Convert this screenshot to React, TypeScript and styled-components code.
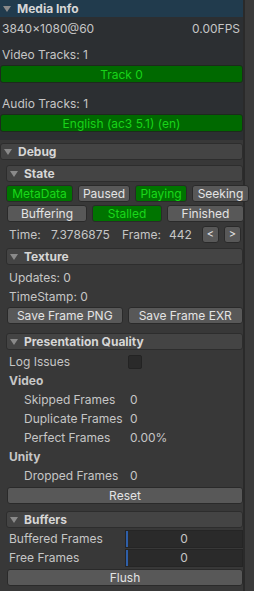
import React from "react";
import styled, { createGlobalStyle } from "styled-components";

const Global = createGlobalStyle`
  html, body { margin: 0; padding: 0; background: #383838; }
  body { font-family: Inter, "Noto Sans", sans-serif; font-size: 12px; color: #c6c6c6; }
  * { box-sizing: border-box; }
`;

const Page = styled.div`
  width: 254px;
  height: 591px;
  display: flex;
  overflow: hidden;
  background: #383838;
`;

const Main = styled.div`
  width: 243px;
  display: flex;
  flex-direction: column;
  position: relative;
  z-index: 1;
`;

const Strip = styled.div`
  width: 11px;
  border-left: 2px solid #2a2a2a;
  background: #3a3a3a;
`;

const InfoBlock = styled.div`
  background: #2c2f32;
  padding-bottom: 8px;
`;

const InfoHeader = styled.div`
  height: 17px;
  background: #213b4d;
  display: flex;
  align-items: center;
  gap: 6px;
  padding-left: 3px;
  font-weight: 700;
  color: #d6d6d6;
`;

const Tri = styled.span`
  width: 0;
  height: 0;
  border-left: 4px solid transparent;
  border-right: 4px solid transparent;
  border-top: 6px solid #8a8a8a;
`;

const Line = styled.div<{ $top?: number; $indent?: number }>`
  height: 18px;
  display: flex;
  align-items: center;
  justify-content: space-between;
  padding: 0 3px 0 ${(p) => p.$indent ?? 2}px;
  margin-top: ${(p) => p.$top ?? 0}px;
  white-space: nowrap;
`;

const GreenBar = styled.div<{ $top?: number }>`
  height: 18px;
  margin-top: ${(p) => p.$top ?? 0}px;
  background: #006900;
  border: 1px solid #1d2a1d;
  border-radius: 3px;
  display: flex;
  align-items: center;
  justify-content: center;
  color: #19d419;
`;

const Section = styled.div<{ $top?: number }>`
  margin-top: ${(p) => p.$top ?? 0}px;
  display: flex;
  flex-direction: column;
`;

const Header = styled.div`
  height: 17px;
  background: #444444;
  border: 1px solid #2d2d2d;
  border-radius: 3px;
  display: flex;
  align-items: center;
  gap: 6px;
  padding-left: 3px;
  font-weight: 700;
  color: #d6d6d6;
`;

const Body = styled.div`
  padding-left: 6px;
  display: flex;
  flex-direction: column;
`;

const Sub = styled.div`
  padding-left: 3px;
  display: flex;
  flex-direction: column;
`;

const BtnRow = styled.div<{ $top?: number; $gap?: number; $inset?: number }>`
  display: flex;
  gap: ${(p) => p.$gap ?? 5}px;
  margin-top: ${(p) => p.$top ?? 0}px;
  padding-left: ${(p) => p.$inset ?? 0}px;
  white-space: nowrap;
`;

const Btn = styled.div<{ $on?: boolean; $w?: number; $grow?: boolean }>`
  height: 17px;
  ${(p) => (p.$w ? `width: ${p.$w}px;` : "")}
  ${(p) => (p.$grow ? "flex: 1;" : "")}
  flex-shrink: 0;
  background: ${(p) => (p.$on ? "#007400" : "#585858")};
  color: ${(p) => (p.$on ? "#1ad81a" : "#e4e4e4")};
  border: 1px solid #2a2a2a;
  border-radius: 3px;
  display: flex;
  align-items: center;
  justify-content: center;
`;

const TimeRow = styled.div`
  height: 18px;
  margin-top: 3px;
  display: flex;
  align-items: center;
  white-space: nowrap;
  padding-left: 3px;
`;

const Lbl = styled.span<{ $w?: number }>`
  display: inline-block;
  ${(p) => (p.$w ? `width: ${p.$w}px;` : "")}
`;

const SmallBtn = styled.div`
  width: 17px;
  height: 17px;
  background: #585858;
  border: 1px solid #2a2a2a;
  border-radius: 3px;
  display: flex;
  align-items: center;
  justify-content: center;
  color: #e4e4e4;
  font-size: 11px;
  & + & { margin-left: 5px; }
`;

const FieldRow = styled.div<{ $indent?: number; $top?: number; $bold?: boolean }>`
  height: 19px;
  display: flex;
  align-items: center;
  white-space: nowrap;
  padding-left: ${(p) => p.$indent ?? 0}px;
  margin-top: ${(p) => p.$top ?? 0}px;
  font-weight: ${(p) => (p.$bold ? 700 : 400)};
`;

const Check = styled.div`
  width: 14px;
  height: 14px;
  background: #2a2a2a;
  border: 1px solid #232323;
  border-radius: 2px;
`;

const WideBtn = styled(Btn)`
  flex: 1;
  margin-top: 2px;
`;

const Meter = styled.div`
  flex: 1;
  height: 18px;
  background: #2a2a2a;
  border: 1px solid #252525;
  position: relative;
  display: flex;
  align-items: center;
  justify-content: center;
`;

const MeterMark = styled.div`
  position: absolute;
  left: 0;
  top: 0;
  bottom: 0;
  width: 2px;
  background: #2f5fa8;
`;

const Title = ({ children }: { children: React.ReactNode }) => (
  <>
    <Tri />
    <span>{children}</span>
  </>
);

export default function App() {
  return (
    <>
      <Global />
      <Page>
        <Main>
          <InfoBlock>
            <InfoHeader>
              <Title>Media Info</Title>
            </InfoHeader>
            <Line $top={2}>
              <span>3840x1080@60</span>
              <span>0.00FPS</span>
            </Line>
            <Line $top={8}>Video Tracks: 1</Line>
            <GreenBar $top={2}>Track 0</GreenBar>
            <Line $top={11}>Audio Tracks: 1</Line>
            <GreenBar $top={2}>English (ac3 5.1) (en)</GreenBar>
          </InfoBlock>
          <Section $top={3}>
            <Header>
              <Title>Debug</Title>
            </Header>
            <Body>
              <Section $top={5}>
                <Header>
                  <Title>State</Title>
                </Header>
                <BtnRow $top={3}>
                  <Btn $on $w={67}>MetaData</Btn>
                  <Btn $w={52}>Paused</Btn>
                  <Btn $on $w={52}>Playing</Btn>
                  <Btn $w={57}>Seeking</Btn>
                </BtnRow>
                <BtnRow $top={3} $inset={1}>
                  <Btn $w={80}>Buffering</Btn>
                  <Btn $on $w={70}>Stalled</Btn>
                  <Btn $w={77}>Finished</Btn>
                </BtnRow>
                <TimeRow>
                  <Lbl $w={42}>Time:</Lbl>
                  <Lbl $w={71}>7.3786875</Lbl>
                  <Lbl $w={47}>Frame:</Lbl>
                  <Lbl $w={33}>442</Lbl>
                  <SmallBtn>&lt;</SmallBtn>
                  <SmallBtn>&gt;</SmallBtn>
                </TimeRow>
              </Section>
              <Section $top={5}>
                <Header>
                  <Title>Texture</Title>
                </Header>
                <Sub>
                  <FieldRow $top={3}>Updates: 0</FieldRow>
                  <FieldRow>TimeStamp: 0</FieldRow>
                </Sub>
                <BtnRow $top={1} $inset={1}>
                  <Btn $grow>Save Frame PNG</Btn>
                  <Btn $grow>Save Frame EXR</Btn>
                </BtnRow>
              </Section>
              <Section $top={9}>
                <Header>
                  <Title>Presentation Quality</Title>
                </Header>
                <Sub>
                  <FieldRow $top={2}>
                    <Lbl $w={119}>Log Issues</Lbl>
                    <Check />
                  </FieldRow>
                  <FieldRow $bold>Video</FieldRow>
                  <FieldRow $indent={15}>
                    <Lbl $w={106}>Skipped Frames</Lbl>0
                  </FieldRow>
                  <FieldRow $indent={15}>
                    <Lbl $w={106}>Duplicate Frames</Lbl>0
                  </FieldRow>
                  <FieldRow $indent={15}>
                    <Lbl $w={106}>Perfect Frames</Lbl>0.00%
                  </FieldRow>
                  <FieldRow $bold>Unity</FieldRow>
                  <FieldRow $indent={15}>
                    <Lbl $w={106}>Dropped Frames</Lbl>0
                  </FieldRow>
                </Sub>
                <BtnRow $inset={1}>
                  <WideBtn>Reset</WideBtn>
                </BtnRow>
              </Section>
              <Section $top={7}>
                <Header>
                  <Title>Buffers</Title>
                </Header>
                <Sub>
                  <FieldRow $top={1}>
                    <Lbl $w={116}>Buffered Frames</Lbl>
                    <Meter>
                      <MeterMark />0
                    </Meter>
                  </FieldRow>
                  <FieldRow>
                    <Lbl $w={116}>Free Frames</Lbl>
                    <Meter>
                      <MeterMark />0
                    </Meter>
                  </FieldRow>
                </Sub>
                <BtnRow $inset={1}>
                  <WideBtn>Flush</WideBtn>
                </BtnRow>
              </Section>
            </Body>
          </Section>
        </Main>
        <Strip />
      </Page>
    </>
  );
}
